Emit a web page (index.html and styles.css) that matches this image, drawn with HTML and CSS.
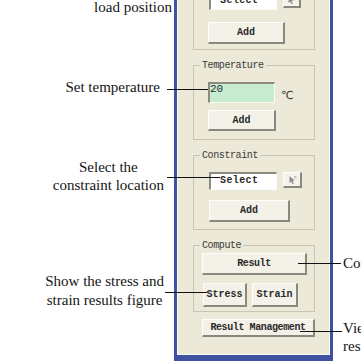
FILE: index.html
```html
<!DOCTYPE html>
<html>
<head>
<meta charset="utf-8">
<link rel="stylesheet" href="styles.css">
</head>
<body>
<div class="stage">
  <div class="panel">
    <fieldset class="group">
      <legend>Load</legend>
      <div class="body body-load">
        <div class="pick-row">
          <div class="field field-select">Select</div>
          <button class="pick-btn pick-load"><svg width="9" height="10" viewBox="0 0 9 10"><path d="M1.5 1 L1.5 8 L3.2 6.4 L4.6 9.2 L5.8 8.6 L4.4 5.8 L6.8 5.8 Z" fill="#8a8a8a"/><path d="M6 1.5 H8.5 M6 3 H8.5" stroke="#b0b0b0" stroke-width="0.8"/></svg></button>
        </div>
        <button class="btn add-load">Add</button>
      </div>
    </fieldset>

    <fieldset class="group group-gap">
      <legend>Temperature</legend>
      <div class="body body-temp">
        <div class="temp-row">
          <div class="field field-temp">20</div>
          <span class="unit">℃</span>
        </div>
        <button class="btn add-temp">Add</button>
      </div>
    </fieldset>

    <fieldset class="group group-gap">
      <legend>Constraint</legend>
      <div class="body body-cons">
        <div class="pick-row">
          <div class="field field-select">Select</div>
          <button class="pick-btn pick-cons"><svg width="9" height="10" viewBox="0 0 9 10"><path d="M1.5 1 L1.5 8 L3.2 6.4 L4.6 9.2 L5.8 8.6 L4.4 5.8 L6.8 5.8 Z" fill="#8a8a8a"/><path d="M6 1.5 H8.5 M6 3 H8.5" stroke="#b0b0b0" stroke-width="0.8"/></svg></button>
        </div>
        <button class="btn add-cons">Add</button>
      </div>
    </fieldset>

    <fieldset class="group group-gap">
      <legend>Compute</legend>
      <div class="body body-comp">
        <button class="btn btn-result">Result</button>
        <div class="ss-row">
          <button class="btn btn-stress">Stress</button>
          <button class="btn btn-strain">Strain</button>
        </div>
      </div>
    </fieldset>

    <button class="btn btn-manage">Result Management</button>
  </div>

  <div class="callout c-load">Select the<br>load position</div>
  <div class="callout c-temp">Set temperature</div>
  <div class="callout c-cons">Select the<br>constraint location</div>
  <div class="callout c-stress">Show the stress and<br>strain results figure</div>
  <div class="callout callout-r c-comp">Compute results</div>
  <div class="callout callout-r c-view">View the<br>results</div>

  <div class="leader l-temp"></div>
  <div class="leader l-cons"></div>
  <div class="leader l-stress"></div>
  <div class="leader l-comp"></div>
  <div class="leader l-view"></div>
</div>
</body>
</html>
```

FILE: styles.css
```css
* { box-sizing: border-box; }
html, body { margin: 0; padding: 0; background: #fff; }

.stage {
  position: relative;
  width: 361px;
  height: 361px;
  overflow: hidden;
  background: #fff;
}

/* ---------- dialog panel ---------- */
.panel {
  margin-left: 174px;
  margin-top: -48px;
  width: 159px;
  height: 411px;
  border-style: solid;
  border-color: #3f52a2;
  border-width: 3px 3px 8px 3px;
  background: #ece9d8;
  box-shadow: inset 1px 0 0 #fbfaf4, inset -1px 0 0 #fbfaf4, inset 0 -1px 0 #fbfaf4;
  padding: 16px 15px 0 16px;
  display: flex;
  flex-direction: column;
  align-items: flex-start;
  font-family: "Liberation Mono", "DejaVu Sans Mono", monospace;
  color: #262626;
}

.group {
  margin: 0;
  padding: 0;
  width: 122px;
  min-width: 0;
  border: 1px solid #c9c5b5;
}
.group-gap { margin-top: 11px; }

.group legend {
  margin-left: 6px;
  padding: 0 2px;
  height: 9px;
  font-size: 10px;
  line-height: 9px;
  letter-spacing: -0.4px;
  color: #3a3a3a;
}

.body { display: flex; flex-direction: column; align-items: flex-start; }
.body-load { padding: 12px 0 5px 15px; }
.body-temp { padding: 12px 0 8px 14px; }
.body-cons { padding: 12px 0 7px 15px; }
.body-comp { padding: 3px 0 4px 8px; }

/* ---------- inputs ---------- */
.field {
  border-style: solid;
  border-width: 2px 1px 1px 2px;
  border-color: #8d8b80 #fbfbf6 #fbfbf6 #8d8b80;
  font-size: 10px;
  line-height: 10px;
  font-weight: bold;
  letter-spacing: 0.4px;
  color: #2a2a2a;
}
.field-select {
  width: 68px;
  height: 18px;
  background: #fff;
  padding: 2px 0 0 9px;
}
.field-temp {
  width: 67px;
  height: 21px;
  background: #c6ebcf;
  padding: 0;
  font-size: 11px;
  line-height: 11px;
  font-weight: normal;
  letter-spacing: 0;
}

.pick-row { display: flex; align-items: flex-start; gap: 6px; }
.pick-btn {
  width: 19px;
  height: 16px;
  padding: 0;
  margin: 0;
  background: #f4f2ea;
  border-style: solid;
  border-width: 1px 2px 2px 1px;
  border-color: #fdfdf9 #8a887d #8a887d #fdfdf9;
  display: flex;
  align-items: center;
  justify-content: center;
}
.pick-load { width: 18px; }

.temp-row { display: flex; align-items: flex-start; }
.unit {
  margin: 8px 0 0 6px;
  font-family: "DejaVu Sans", sans-serif;
  font-size: 11px;
  line-height: 11px;
  color: #333;
}

/* ---------- buttons ---------- */
.btn {
  margin: 0;
  padding: 0;
  font-family: "Liberation Mono", "DejaVu Sans Mono", monospace;
  font-size: 10px;
  font-weight: bold;
  letter-spacing: 0;
  color: #2a2a2a;
  background: #f3f1e8;
  border-style: solid;
  border-width: 1px 2px 2px 1px;
  border-color: #fdfdf9 #8a887d #8a887d #fdfdf9;
  display: flex;
  align-items: center;
  justify-content: center;
}
.add-load { margin: 12px 0 0 -1px; width: 77px; height: 22px; }
.add-temp { margin-top: 7px; width: 68px; height: 21px; }
.add-cons { margin-top: 10px; width: 81px; height: 22px; }
.btn-result { width: 105px; height: 22px; letter-spacing: -0.4px; }
.ss-row { display: flex; gap: 5px; margin: 8px 0 0 1px; }
.btn-stress { width: 44px; height: 24px; }
.btn-strain { width: 46px; height: 24px; }
.btn-manage { margin: 7px 0 0 9px; width: 113px; height: 18px; letter-spacing: -0.4px; }

/* ---------- callouts ---------- */
.callout {
  position: absolute;
  font-family: "Liberation Serif", "Times New Roman", serif;
  font-size: 15px;
  line-height: 18px;
  color: #151515;
  text-align: center;
  white-space: nowrap;
}
.callout-r { text-align: left; }
.c-load { right: 189px; top: -20px; }
.c-temp { right: 201px; top: 78px; }
.c-cons { right: 197px; top: 158px; }
.c-stress { right: 197px; top: 272px; line-height: 18.5px; }
.c-comp { left: 343px; top: 254px; }
.c-view { left: 343px; top: 319px; }

.leader {
  position: absolute;
  height: 1px;
  background: #111;
}
.l-temp { left: 167px; width: 41px; top: 89px; }
.l-cons { left: 167px; width: 53px; top: 177px; }
.l-stress { left: 165px; width: 42px; top: 292px; }
.l-comp { left: 298px; width: 43px; top: 263px; }
.l-view { left: 300px; width: 42px; top: 331px; }
```
